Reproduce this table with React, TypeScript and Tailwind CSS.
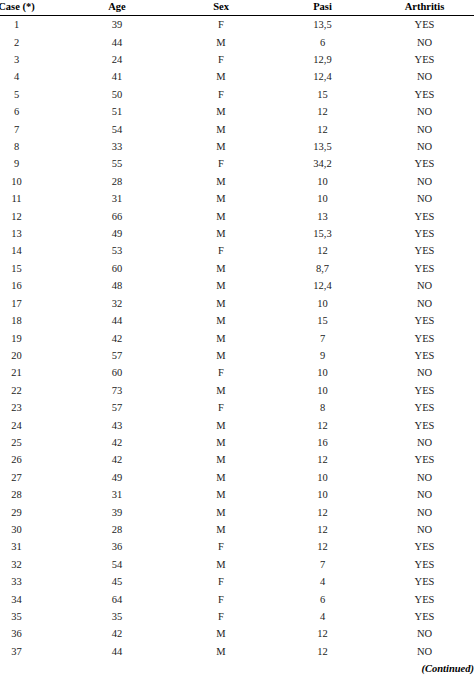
const rows: [number, number, string, string, string][] = [
  [1, 39, "F", "13,5", "YES"],
  [2, 44, "M", "6", "NO"],
  [3, 24, "F", "12,9", "YES"],
  [4, 41, "M", "12,4", "NO"],
  [5, 50, "F", "15", "YES"],
  [6, 51, "M", "12", "NO"],
  [7, 54, "M", "12", "NO"],
  [8, 33, "M", "13,5", "NO"],
  [9, 55, "F", "34,2", "YES"],
  [10, 28, "M", "10", "NO"],
  [11, 31, "M", "10", "NO"],
  [12, 66, "M", "13", "YES"],
  [13, 49, "M", "15,3", "YES"],
  [14, 53, "F", "12", "YES"],
  [15, 60, "M", "8,7", "YES"],
  [16, 48, "M", "12,4", "NO"],
  [17, 32, "M", "10", "NO"],
  [18, 44, "M", "15", "YES"],
  [19, 42, "M", "7", "YES"],
  [20, 57, "M", "9", "YES"],
  [21, 60, "F", "10", "NO"],
  [22, 73, "M", "10", "YES"],
  [23, 57, "F", "8", "YES"],
  [24, 43, "M", "12", "YES"],
  [25, 42, "M", "16", "NO"],
  [26, 42, "M", "12", "YES"],
  [27, 49, "M", "10", "NO"],
  [28, 31, "M", "10", "NO"],
  [29, 39, "M", "12", "NO"],
  [30, 28, "M", "12", "NO"],
  [31, 36, "F", "12", "YES"],
  [32, 54, "M", "7", "YES"],
  [33, 45, "F", "4", "YES"],
  [34, 64, "F", "6", "YES"],
  [35, 35, "F", "4", "YES"],
  [36, 42, "M", "12", "NO"],
  [37, 44, "M", "12", "NO"],
];

const cols = "grid grid-cols-[33px_168px_40px_163px_41px]";

function Cell({ children }: { children: React.ReactNode }) {
  return (
    <div className="flex justify-center whitespace-nowrap">{children}</div>
  );
}

export default function App() {
  return (
    <div className="h-[676px] w-[474px] overflow-hidden bg-white font-['Liberation_Serif',serif] text-[10.5px]">
      <div
        className={`${cols} h-[15.5px] border-b-[1.5px] border-black text-[10.5px] font-bold leading-[14px] text-black`}
      >
        <Cell>Case (*)</Cell>
        <Cell>Age</Cell>
        <Cell>Sex</Cell>
        <Cell>Pasi</Cell>
        <Cell>Arthritis</Cell>
      </div>
      <div className="mt-[0.7px] text-[#222]">
        {rows.map(([n, age, sex, pasi, arth]) => (
          <div key={n} className={`${cols} h-[17.42px] leading-[17.42px]`}>
            <Cell>{n}</Cell>
            <Cell>{age}</Cell>
            <Cell>{sex}</Cell>
            <Cell>{pasi}</Cell>
            <Cell>{arth}</Cell>
          </div>
        ))}
        <div className="flex h-[17.42px] justify-end text-[10.5px] font-bold italic leading-[17.42px] text-black">
          (Continued)
        </div>
      </div>
    </div>
  );
}
